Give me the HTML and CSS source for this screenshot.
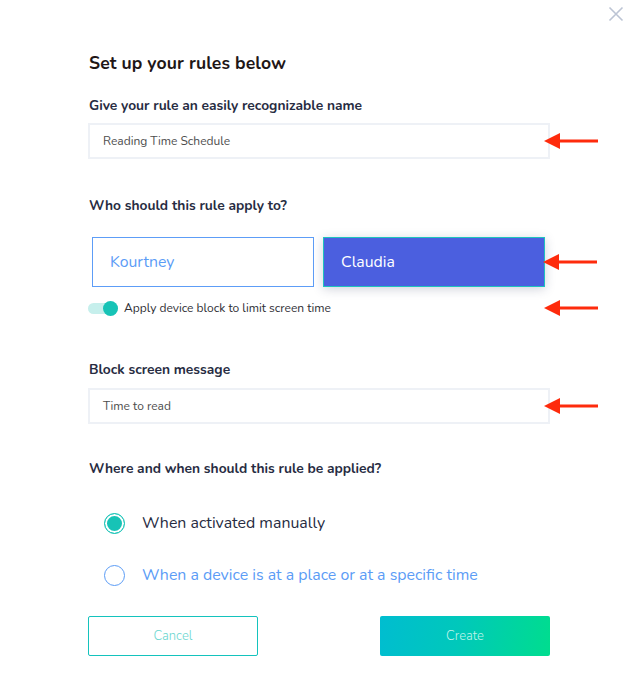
FILE: index.html
```html
<!DOCTYPE html>
<html>
<head>
<meta charset="utf-8">
<link rel="stylesheet" href="styles.css">
</head>
<body>
<div class="modal">
  <button class="close" aria-label="Close">
    <svg width="16" height="16" viewBox="0 0 16 16"><path d="M1.5 1.5 L14.5 14.5 M14.5 1.5 L1.5 14.5" stroke="#bcc4d4" stroke-width="1.6" fill="none"/></svg>
  </button>
  <h1 class="title">Set up your rules below</h1>

  <div class="label label-first">Give your rule an easily recognizable name</div>
  <div class="row">
    <div class="input">Reading Time Schedule</div>
    <svg class="arrow arrow-input" width="54" height="16" viewBox="0 0 54 16"><path d="M0 8 L16 0 L16 6.5 L54 6.5 L54 9.5 L16 9.5 L16 16 Z" fill="#fe2b0c"/></svg>
  </div>

  <div class="label label-who">Who should this rule apply to?</div>
  <div class="row">
    <div class="people">
      <div class="person person-off">Kourtney</div>
      <div class="person person-on">Claudia</div>
    </div>
    <svg class="arrow arrow-people" width="54" height="16" viewBox="0 0 54 16"><path d="M0 8 L16 0 L16 6.5 L54 6.5 L54 9.5 L16 9.5 L16 16 Z" fill="#fe2b0c"/></svg>
  </div>
  <div class="row">
    <div class="toggle-line">
      <span class="toggle"><span class="knob"></span></span>
      <span class="toggle-text">Apply device block to limit screen time</span>
    </div>
    <svg class="arrow arrow-toggle" width="54" height="16" viewBox="0 0 54 16"><path d="M0 8 L16 0 L16 6.5 L54 6.5 L54 9.5 L16 9.5 L16 16 Z" fill="#fe2b0c"/></svg>
  </div>

  <div class="label label-block">Block screen message</div>
  <div class="row">
    <div class="input">Time to read</div>
    <svg class="arrow arrow-input" width="54" height="16" viewBox="0 0 54 16"><path d="M0 8 L16 0 L16 6.5 L54 6.5 L54 9.5 L16 9.5 L16 16 Z" fill="#fe2b0c"/></svg>
  </div>

  <div class="label label-where">Where and when should this rule be applied?</div>
  <div class="options">
    <div class="option option-on"><span class="radio radio-on"></span><span>When activated manually</span></div>
    <div class="option option-off"><span class="radio radio-off"></span><span>When a device is at a place or at a specific time</span></div>
  </div>

  <div class="actions">
    <button class="btn btn-cancel">Cancel</button>
    <button class="btn btn-create">Create</button>
  </div>
</div>
</body>
</html>
```
FILE: styles.css
```css
* { box-sizing: border-box; }
html, body { margin: 0; padding: 0; background: #fff; }
body {
  font-family: Nunito, Lato, "Open Sans", sans-serif;
  color: #262b40;
  width: 642px;
  height: 685px;
  overflow: hidden;
}
.modal {
  position: relative;
  padding: 53px 0 0 88px;
  width: 642px;
  height: 685px;
}
.close {
  position: absolute;
  top: 6px;
  right: 18px;
  border: 0;
  background: none;
  padding: 0;
  width: 16px;
  height: 16px;
}
.title {
  margin: 0 0 0 1px;
  font-size: 17.6px;
  line-height: 20px;
  font-weight: 700;
  color: #1f1717;
  letter-spacing: 0.1px;
}
.label {
  font-size: 13.8px;
  line-height: 16px;
  font-weight: 700;
  color: #272c42;
  margin-left: 1px;
}
.label-first { margin-top: 25px; margin-bottom: 9px; }
.label-who { margin-top: 39px; }
.label-block { margin-top: 46px; margin-bottom: 10px; }
.label-where { margin-top: 37px; }
.row {
  position: relative;
  width: 462px;
}
.input {
  height: 36px;
  border: 2px solid #eef1f6;
  padding: 0 13px;
  font-size: 12px;
  line-height: 32px;
  color: #4d4d4d;
}
.arrow {
  position: absolute;
  top: 50%;
  margin-top: -8px;
}
.arrow-input { left: 456px; }
.arrow-people { left: 455px; }
.arrow-toggle { left: 456px; }
.people {
  display: flex;
  gap: 9px;
  padding: 0 4px;
  margin-top: 23px;
}
.person {
  width: 222px;
  height: 50px;
  padding-left: 17px;
  font-size: 15.8px;
  line-height: 48px;
}
.person-off {
  border: 1px solid #5d9df7;
  color: #5b9cf6;
}
.person-on {
  background: #4b5fdf;
  border: 1px solid #1fc2bf;
  color: #fff;
  box-shadow: 0 2px 10px rgba(40, 50, 90, 0.22);
}
.toggle-line {
  display: flex;
  align-items: center;
  gap: 6px;
  margin-top: 13px;
  height: 16px;
}
.toggle {
  position: relative;
  width: 30px;
  height: 11px;
  border-radius: 6px;
  background: #c6efec;
}
.knob {
  position: absolute;
  right: 0;
  top: -2px;
  width: 15px;
  height: 15px;
  border-radius: 50%;
  background: #17c3b6;
}
.toggle-text {
  font-size: 12px;
  color: #2f2f35;
}
.options {
  margin-top: 35px;
  padding-left: 16px;
}
.option {
  display: flex;
  align-items: center;
  gap: 17px;
  height: 22px;
  font-size: 15.9px;
}
.option + .option { margin-top: 30px; }
.option-on { color: #272c42; }
.option-off { color: #5b9cf6; }
.radio {
  width: 21px;
  height: 21px;
  border-radius: 50%;
  flex: none;
}
.radio-on {
  border: 1.5px solid #17c3b6;
  background: #17c3b6;
  box-shadow: inset 0 0 0 2px #fff;
}
.radio-off {
  border: 1.5px solid #5b9cf6;
  background: #fff;
}
.actions {
  display: flex;
  justify-content: space-between;
  width: 462px;
  margin-top: 30px;
}
.btn {
  width: 170px;
  height: 40px;
  border-radius: 2px;
  font-family: Nunito, Lato, "Open Sans", sans-serif;
  font-size: 13px;
  font-weight: 300;
  padding: 0;
}
.btn-cancel {
  background: #fff;
  border: 1px solid #14c3bd;
  color: #6bd6cf;
}
.btn-create {
  border: 0;
  background: linear-gradient(100deg, #00bdd0 0%, #00c8bb 45%, #00dd8e 100%);
  color: #bff3ea;
}
```
